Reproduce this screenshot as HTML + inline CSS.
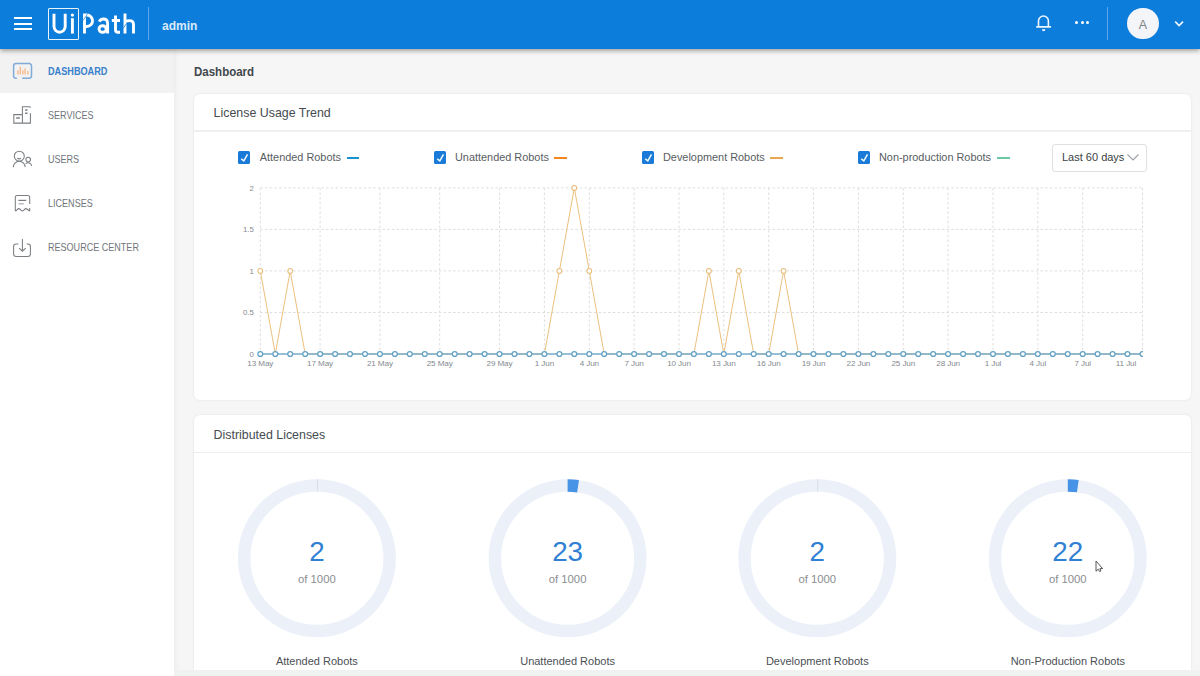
<!DOCTYPE html>
<html><head><meta charset="utf-8">
<style>
*{box-sizing:border-box}
html,body{margin:0;padding:0;width:1200px;height:676px;overflow:hidden;background:#f6f6f7;font-family:"Liberation Sans",sans-serif}
.abs{position:absolute}
#hdr{position:absolute;left:0;top:0;width:1200px;height:48.5px;background:#0d7ddb;box-shadow:0 1.5px 5px rgba(0,0,0,.4);z-index:5}
#side{position:absolute;left:0;top:48px;width:174px;height:628px;background:#fff;box-shadow:1px 0 6px rgba(0,0,0,.06);z-index:2}
.nav{position:absolute;left:0;width:174px;height:44px}
.nav .t{position:absolute;left:47.6px;top:17.9px;font-size:10.4px;transform:scaleX(0.87);transform-origin:0 0;color:#6f757a;white-space:nowrap;line-height:12px}
.nav.act{background:#f2f2f2}
.nav.act .t{color:#3a7fcb;font-weight:bold;transform:scaleX(0.88)}
.card{position:absolute;left:193.6px;width:997px;background:#fff;border-radius:6px;box-shadow:0 0 3px rgba(0,0,0,.08)}
.ctitle{position:absolute;left:20px;font-size:12.4px;color:#454b51;white-space:nowrap}
.cdiv{position:absolute;left:0;width:100%;height:1px;background:#ececec}
.leg{position:absolute;top:151px;font-size:10.9px;color:#585d62;white-space:nowrap}
.cb{position:absolute;top:151px;width:12.3px;height:12.8px;background:#1a7ad8;border-radius:1.6px}
.cb svg{position:absolute;left:0;top:0}
.lg{position:absolute;top:156.6px;width:12.5px;height:2px}
.dnum{position:absolute;top:535.8px;width:120px;text-align:center;font-size:27.8px;color:#3080d4;line-height:32px}
.dof{position:absolute;top:572px;width:120px;text-align:center;font-size:11.3px;color:#8a8d90;line-height:14px}
.dlab{position:absolute;top:654px;width:160px;text-align:center;font-size:11px;color:#4b5055;line-height:14px}
</style></head><body>
<div id="hdr">
  <div class="abs" style="left:14px;top:16.5px;width:17.5px;height:2px;background:#fff"></div>
  <div class="abs" style="left:14px;top:22.6px;width:17.5px;height:2px;background:#fff"></div>
  <div class="abs" style="left:14px;top:28.4px;width:17.5px;height:2px;background:#fff"></div>
  <div class="abs" style="left:47.6px;top:7.6px;width:31.6px;height:32px;border:1.6px solid #e8f3fc;border-radius:1px"></div>
  <svg class="abs" style="left:0;top:0" width="150" height="48" viewBox="0 0 150 48">
    <g fill="none" stroke="#fff" stroke-width="2.9">
      <path d="M54,13.8 V26.6 A5.6,5.6 0 0 0 65.2,26.6 V13.8"/>
      <path d="M72.4,18.2 V33.6"/>
      <path d="M84.5,33.6 V15 H86.8 A5.75,5.75 0 0 1 86.8,26.5 H84.5"/>
      <path d="M99.2,21.6 Q100.6,19 103.4,19 Q107.6,19 107.6,23.4 V33.6"/>
      <ellipse cx="102.6" cy="29" rx="3.6" ry="3.3"/>
      <path d="M115.5,15.4 V30 Q115.5,32.2 117.8,32.2 H120 M111.8,20.5 H120"/>
      <path d="M125,13.6 V33.6 M125,24.5 Q125,20.6 129.3,20.6 Q133.5,20.6 133.5,24.5 V33.6"/>
    </g>
    <circle cx="72.4" cy="15.1" r="1.65" fill="#fff"/>
    <path d="M83,20.5 L87.5,14" stroke="#0d7ddb" stroke-width="0.7"/>
    <path d="M123.5,28 L127.5,22" stroke="#0d7ddb" stroke-width="0.7"/>
  </svg>
  <div class="abs" style="left:148px;top:7px;width:1px;height:33px;background:#5aa6ec"></div>
  <div class="abs" style="left:162px;top:18px;font-size:12px;font-weight:bold;color:#dbeaf8;line-height:16px">admin</div>
  <svg class="abs" style="left:1030px;top:10px" width="30" height="30" viewBox="0 0 30 30">
    <path d="M6.8,16.9 H20.4 M8.5,16.9 V10.95 A4.95,4.95 0 0 1 18.4,10.95 V16.9" fill="none" stroke="#eef6fd" stroke-width="1.6" stroke-linecap="round"/>
    <path d="M11.9,19.3 H15.4 A1.75,1.9 0 0 1 11.9,19.3 Z" fill="#eef6fd"/>
  </svg>
  <div class="abs" style="left:1075px;top:21px;width:3px;height:3px;border-radius:50%;background:#fff"></div>
  <div class="abs" style="left:1080.5px;top:21px;width:3px;height:3px;border-radius:50%;background:#fff"></div>
  <div class="abs" style="left:1086px;top:21px;width:3px;height:3px;border-radius:50%;background:#fff"></div>
  <div class="abs" style="left:1107px;top:7px;width:1px;height:32.5px;background:#5aa6ec"></div>
  <div class="abs" style="left:1127px;top:7.7px;width:31.8px;height:31.8px;border-radius:50%;background:#f3f5f8;text-align:center;line-height:34.6px;font-size:12.5px;color:#808387">A</div>
  <svg class="abs" style="left:1172px;top:19px" width="14" height="10" viewBox="0 0 14 10">
    <path d="M3.2,2.6 L7.1,6.6 L11,2.6" fill="none" stroke="#f2f8fd" stroke-width="1.6"/>
  </svg>
</div>
<div id="side">
  <div class="nav act" style="top:0;height:44.8px"><div class="t">DASHBOARD</div></div>
  <div class="nav" style="top:44px"><div class="t">SERVICES</div></div>
  <div class="nav" style="top:88px"><div class="t">USERS</div></div>
  <div class="nav" style="top:132px"><div class="t">LICENSES</div></div>
  <div class="nav" style="top:176px"><div class="t">RESOURCE CENTER</div></div>
  <!-- icons -->
  <svg class="abs" style="left:0;top:0" width="40" height="230" viewBox="0 48 40 230">
    <path d="M16.9,78.2 H15.9 A2.3,2.3 0 0 1 13.6,75.9 V65.9 A2.3,2.3 0 0 1 15.9,63.6 H29.2 A2.3,2.3 0 0 1 31.5,65.9 V75.9 A2.3,2.3 0 0 1 29.2,78.2 H22.2" fill="none" stroke="#80aad8" stroke-width="1.5"/>
    <path d="M17.9,74.6 V70.2 M20.3,74.6 V66.7 M22.9,74.6 V70.2 M25.1,74.6 V68.2 M27.9,74.6 V70.9" stroke="#f6b888" stroke-width="1.35"/>
    <g fill="none" stroke="#7a7e82" stroke-width="1.05">
      <path d="M22.4,123.1 V106.7 H29.4 Q30.4,106.7 30.6,107.6 M30.4,113.3 V123.1 H13.8 V114.6 H22.4"/>
      <path d="M16.2,118 H19.8 M25.1,110 H27.5 M25.1,113.2 H27.5" stroke-width="1.4"/>
      <circle cx="19.3" cy="156.2" r="5"/>
      <path d="M13.3,167.3 A5.9,5.9 0 0 1 25.1,167.1"/>
      <path d="M17.4,158.3 Q19.1,159.3 20.9,158.3" stroke-width="1.2"/>
      <circle cx="28.2" cy="159.6" r="2.3"/>
      <path d="M25.6,163.6 A3.8,3.8 0 0 1 31.7,165.9"/>
      <path d="M15.3,211 V197.4 A2,2 0 0 1 17.3,195.4 H27.7 A2,2 0 0 1 29.7,197.4 V204 M29.7,208 V210.8 C28.6,210.8 27.1,208.6 25.9,208.6 C24.6,208.6 23.6,211 22.4,211 C21.2,211 20.1,208.6 18.85,208.6 C17.6,208.6 16.4,211 15.3,211"/>
      <path d="M18.4,200.4 H26.2" stroke-width="1.2"/>
      <path d="M18.4,203.8 H23.8" stroke="#a3a6a9" stroke-width="1.1"/>
      <path d="M18.4,243.9 H16.1 A2.5,2.5 0 0 0 13.6,246.4 V253.9 A2.5,2.5 0 0 0 16.1,256.4 H27.9 A2.5,2.5 0 0 0 30.4,253.9 V246.4 A2.5,2.5 0 0 0 27.9,243.9 H26.6"/>
      <path d="M22.4,239.1 V251 M19.1,248.1 L22.4,251.2 L25.7,248.1"/>
    </g>
  </svg>
</div>
<div class="abs" style="left:193.5px;top:63.6px;font-size:13px;font-weight:bold;color:#42474c;line-height:16px;transform:scaleX(0.885);transform-origin:0 0">Dashboard</div>

<div class="card" style="top:94px;height:306px">
  <div class="ctitle" style="top:10.8px;line-height:16px">License Usage Trend</div>
  <div class="cdiv" style="top:36.2px;height:1.6px;background:#efefef"></div>
</div>
<div class="cb" style="left:238px"><svg width="13" height="13"><path d="M3.2,7.8 L5.8,9.8 L9.5,3.3" fill="none" stroke="#eaf4fc" stroke-width="1.6"/></svg></div>
<div class="leg" style="left:259.8px;top:150.8px">Attended Robots</div>
<div class="lg" style="left:346.5px;background:#1991d2"></div>
<div class="cb" style="left:433.8px"><svg width="13" height="13"><path d="M3.2,7.8 L5.8,9.8 L9.5,3.3" fill="none" stroke="#eaf4fc" stroke-width="1.6"/></svg></div>
<div class="leg" style="left:455px;top:150.8px">Unattended Robots</div>
<div class="lg" style="left:554px;background:#f5871f"></div>
<div class="cb" style="left:641.8px"><svg width="13" height="13"><path d="M3.2,7.8 L5.8,9.8 L9.5,3.3" fill="none" stroke="#eaf4fc" stroke-width="1.6"/></svg></div>
<div class="leg" style="left:663px;top:150.8px">Development Robots</div>
<div class="lg" style="left:770px;background:#eaa84e"></div>
<div class="cb" style="left:858px"><svg width="13" height="13"><path d="M3.2,7.8 L5.8,9.8 L9.5,3.3" fill="none" stroke="#eaf4fc" stroke-width="1.6"/></svg></div>
<div class="leg" style="left:879px;top:150.8px">Non-production Robots</div>
<div class="lg" style="left:997.3px;background:#6cc9a1"></div>
<div class="abs" style="left:1052px;top:144px;width:95px;height:27.6px;border:1px solid #e0e0e0;border-radius:3px;background:#fff"></div>
<div class="abs" style="left:1062px;top:150px;font-size:11px;color:#3a3f44;line-height:14px">Last 60 days</div>
<svg class="abs" style="left:1126px;top:152px" width="14" height="10"><path d="M1.5,2.5 L7,8 L12.5,2.5" fill="none" stroke="#9aa0a6" stroke-width="1.1"/></svg>
<svg class="abs" style="left:0;top:0;z-index:3" width="1200" height="400" font-family="Liberation Sans">
<line x1="260.3" y1="187.9" x2="1142.5" y2="187.9" stroke="#dedede" stroke-width="1" stroke-dasharray="2.5,2.2"/>
<line x1="260.3" y1="229.4" x2="1142.5" y2="229.4" stroke="#dedede" stroke-width="1" stroke-dasharray="2.5,2.2"/>
<line x1="260.3" y1="270.9" x2="1142.5" y2="270.9" stroke="#dedede" stroke-width="1" stroke-dasharray="2.5,2.2"/>
<line x1="260.3" y1="312.5" x2="1142.5" y2="312.5" stroke="#dedede" stroke-width="1" stroke-dasharray="2.5,2.2"/>
<line x1="260.3" y1="187.9" x2="260.3" y2="354.0" stroke="#dedede" stroke-width="1" stroke-dasharray="2.5,2.2"/>
<line x1="320.1" y1="187.9" x2="320.1" y2="354.0" stroke="#dedede" stroke-width="1" stroke-dasharray="2.5,2.2"/>
<line x1="379.9" y1="187.9" x2="379.9" y2="354.0" stroke="#dedede" stroke-width="1" stroke-dasharray="2.5,2.2"/>
<line x1="439.7" y1="187.9" x2="439.7" y2="354.0" stroke="#dedede" stroke-width="1" stroke-dasharray="2.5,2.2"/>
<line x1="499.5" y1="187.9" x2="499.5" y2="354.0" stroke="#dedede" stroke-width="1" stroke-dasharray="2.5,2.2"/>
<line x1="544.4" y1="187.9" x2="544.4" y2="354.0" stroke="#dedede" stroke-width="1" stroke-dasharray="2.5,2.2"/>
<line x1="589.3" y1="187.9" x2="589.3" y2="354.0" stroke="#dedede" stroke-width="1" stroke-dasharray="2.5,2.2"/>
<line x1="634.1" y1="187.9" x2="634.1" y2="354.0" stroke="#dedede" stroke-width="1" stroke-dasharray="2.5,2.2"/>
<line x1="679.0" y1="187.9" x2="679.0" y2="354.0" stroke="#dedede" stroke-width="1" stroke-dasharray="2.5,2.2"/>
<line x1="723.8" y1="187.9" x2="723.8" y2="354.0" stroke="#dedede" stroke-width="1" stroke-dasharray="2.5,2.2"/>
<line x1="768.7" y1="187.9" x2="768.7" y2="354.0" stroke="#dedede" stroke-width="1" stroke-dasharray="2.5,2.2"/>
<line x1="813.5" y1="187.9" x2="813.5" y2="354.0" stroke="#dedede" stroke-width="1" stroke-dasharray="2.5,2.2"/>
<line x1="858.4" y1="187.9" x2="858.4" y2="354.0" stroke="#dedede" stroke-width="1" stroke-dasharray="2.5,2.2"/>
<line x1="903.3" y1="187.9" x2="903.3" y2="354.0" stroke="#dedede" stroke-width="1" stroke-dasharray="2.5,2.2"/>
<line x1="948.1" y1="187.9" x2="948.1" y2="354.0" stroke="#dedede" stroke-width="1" stroke-dasharray="2.5,2.2"/>
<line x1="993.0" y1="187.9" x2="993.0" y2="354.0" stroke="#dedede" stroke-width="1" stroke-dasharray="2.5,2.2"/>
<line x1="1037.8" y1="187.9" x2="1037.8" y2="354.0" stroke="#dedede" stroke-width="1" stroke-dasharray="2.5,2.2"/>
<line x1="1082.7" y1="187.9" x2="1082.7" y2="354.0" stroke="#dedede" stroke-width="1" stroke-dasharray="2.5,2.2"/>
<line x1="1142.5" y1="187.9" x2="1142.5" y2="354.0" stroke="#dedede" stroke-width="1" stroke-dasharray="2.5,2.2"/>
<text x="253.8" y="190.7" text-anchor="end" font-size="7.8" fill="#858a8f">2</text>
<text x="253.8" y="232.2" text-anchor="end" font-size="7.8" fill="#858a8f">1.5</text>
<text x="253.8" y="273.8" text-anchor="end" font-size="7.8" fill="#858a8f">1</text>
<text x="253.8" y="315.3" text-anchor="end" font-size="7.8" fill="#858a8f">0.5</text>
<text x="253.8" y="356.8" text-anchor="end" font-size="7.8" fill="#858a8f">0</text>
<text x="260.3" y="365.8" text-anchor="middle" font-size="8.1" letter-spacing="-0.1" fill="#858a8f">13 May</text>
<text x="320.1" y="365.8" text-anchor="middle" font-size="8.1" letter-spacing="-0.1" fill="#858a8f">17 May</text>
<text x="379.9" y="365.8" text-anchor="middle" font-size="8.1" letter-spacing="-0.1" fill="#858a8f">21 May</text>
<text x="439.7" y="365.8" text-anchor="middle" font-size="8.1" letter-spacing="-0.1" fill="#858a8f">25 May</text>
<text x="499.5" y="365.8" text-anchor="middle" font-size="8.1" letter-spacing="-0.1" fill="#858a8f">29 May</text>
<text x="544.4" y="365.8" text-anchor="middle" font-size="8.1" letter-spacing="-0.1" fill="#858a8f">1 Jun</text>
<text x="589.3" y="365.8" text-anchor="middle" font-size="8.1" letter-spacing="-0.1" fill="#858a8f">4 Jun</text>
<text x="634.1" y="365.8" text-anchor="middle" font-size="8.1" letter-spacing="-0.1" fill="#858a8f">7 Jun</text>
<text x="679.0" y="365.8" text-anchor="middle" font-size="8.1" letter-spacing="-0.1" fill="#858a8f">10 Jun</text>
<text x="723.8" y="365.8" text-anchor="middle" font-size="8.1" letter-spacing="-0.1" fill="#858a8f">13 Jun</text>
<text x="768.7" y="365.8" text-anchor="middle" font-size="8.1" letter-spacing="-0.1" fill="#858a8f">16 Jun</text>
<text x="813.5" y="365.8" text-anchor="middle" font-size="8.1" letter-spacing="-0.1" fill="#858a8f">19 Jun</text>
<text x="858.4" y="365.8" text-anchor="middle" font-size="8.1" letter-spacing="-0.1" fill="#858a8f">22 Jun</text>
<text x="903.3" y="365.8" text-anchor="middle" font-size="8.1" letter-spacing="-0.1" fill="#858a8f">25 Jun</text>
<text x="948.1" y="365.8" text-anchor="middle" font-size="8.1" letter-spacing="-0.1" fill="#858a8f">28 Jun</text>
<text x="993.0" y="365.8" text-anchor="middle" font-size="8.1" letter-spacing="-0.1" fill="#858a8f">1 Jul</text>
<text x="1037.8" y="365.8" text-anchor="middle" font-size="8.1" letter-spacing="-0.1" fill="#858a8f">4 Jul</text>
<text x="1082.7" y="365.8" text-anchor="middle" font-size="8.1" letter-spacing="-0.1" fill="#858a8f">7 Jul</text>
<text x="1126.0" y="365.8" text-anchor="middle" font-size="8.1" letter-spacing="-0.1" fill="#858a8f">11 Jul</text>
<polyline points="260.3,270.9 275.3,354.0 290.2,270.9 305.2,354.0 320.1,354.0 335.1,354.0 350.0,354.0 365.0,354.0 379.9,354.0 394.9,354.0 409.8,354.0 424.8,354.0 439.7,354.0 454.7,354.0 469.6,354.0 484.6,354.0 499.5,354.0 514.5,354.0 529.4,354.0 544.4,354.0 559.4,270.9 574.3,187.9 589.3,270.9 604.2,354.0 619.2,354.0 634.1,354.0 649.1,354.0 664.0,354.0 679.0,354.0 693.9,354.0 708.9,270.9 723.8,354.0 738.8,270.9 753.7,354.0 768.7,354.0 783.6,270.9 798.6,354.0 813.5,354.0 828.5,354.0 843.4,354.0 858.4,354.0 873.4,354.0 888.3,354.0 903.3,354.0 918.2,354.0 933.2,354.0 948.1,354.0 963.1,354.0 978.0,354.0 993.0,354.0 1007.9,354.0 1022.9,354.0 1037.8,354.0 1052.8,354.0 1067.7,354.0 1082.7,354.0 1097.6,354.0 1112.6,354.0 1127.5,354.0 1142.5,354.0" fill="none" stroke="#ebc07e" stroke-width="1"/>
<circle cx="260.3" cy="270.9" r="2.4" fill="#fff" stroke="#e8bd7c" stroke-width="1.05"/>
<circle cx="290.2" cy="270.9" r="2.4" fill="#fff" stroke="#e8bd7c" stroke-width="1.05"/>
<circle cx="559.4" cy="270.9" r="2.4" fill="#fff" stroke="#e8bd7c" stroke-width="1.05"/>
<circle cx="574.3" cy="187.9" r="2.4" fill="#fff" stroke="#e8bd7c" stroke-width="1.05"/>
<circle cx="589.3" cy="270.9" r="2.4" fill="#fff" stroke="#e8bd7c" stroke-width="1.05"/>
<circle cx="708.9" cy="270.9" r="2.4" fill="#fff" stroke="#e8bd7c" stroke-width="1.05"/>
<circle cx="738.8" cy="270.9" r="2.4" fill="#fff" stroke="#e8bd7c" stroke-width="1.05"/>
<circle cx="783.6" cy="270.9" r="2.4" fill="#fff" stroke="#e8bd7c" stroke-width="1.05"/>
<clipPath id="cp"><rect x="252.3" y="150" width="890.7" height="220"/></clipPath><g clip-path="url(#cp)">
<line x1="260.3" y1="354.0" x2="1142.5" y2="354.0" stroke="#74abc9" stroke-width="1.6"/>
<circle cx="260.3" cy="354.0" r="2.45" fill="#fff" stroke="#64a2c4" stroke-width="1.25"/>
<circle cx="275.3" cy="354.0" r="2.45" fill="#fff" stroke="#64a2c4" stroke-width="1.25"/>
<circle cx="290.2" cy="354.0" r="2.45" fill="#fff" stroke="#64a2c4" stroke-width="1.25"/>
<circle cx="305.2" cy="354.0" r="2.45" fill="#fff" stroke="#64a2c4" stroke-width="1.25"/>
<circle cx="320.1" cy="354.0" r="2.45" fill="#fff" stroke="#64a2c4" stroke-width="1.25"/>
<circle cx="335.1" cy="354.0" r="2.45" fill="#fff" stroke="#64a2c4" stroke-width="1.25"/>
<circle cx="350.0" cy="354.0" r="2.45" fill="#fff" stroke="#64a2c4" stroke-width="1.25"/>
<circle cx="365.0" cy="354.0" r="2.45" fill="#fff" stroke="#64a2c4" stroke-width="1.25"/>
<circle cx="379.9" cy="354.0" r="2.45" fill="#fff" stroke="#64a2c4" stroke-width="1.25"/>
<circle cx="394.9" cy="354.0" r="2.45" fill="#fff" stroke="#64a2c4" stroke-width="1.25"/>
<circle cx="409.8" cy="354.0" r="2.45" fill="#fff" stroke="#64a2c4" stroke-width="1.25"/>
<circle cx="424.8" cy="354.0" r="2.45" fill="#fff" stroke="#64a2c4" stroke-width="1.25"/>
<circle cx="439.7" cy="354.0" r="2.45" fill="#fff" stroke="#64a2c4" stroke-width="1.25"/>
<circle cx="454.7" cy="354.0" r="2.45" fill="#fff" stroke="#64a2c4" stroke-width="1.25"/>
<circle cx="469.6" cy="354.0" r="2.45" fill="#fff" stroke="#64a2c4" stroke-width="1.25"/>
<circle cx="484.6" cy="354.0" r="2.45" fill="#fff" stroke="#64a2c4" stroke-width="1.25"/>
<circle cx="499.5" cy="354.0" r="2.45" fill="#fff" stroke="#64a2c4" stroke-width="1.25"/>
<circle cx="514.5" cy="354.0" r="2.45" fill="#fff" stroke="#64a2c4" stroke-width="1.25"/>
<circle cx="529.4" cy="354.0" r="2.45" fill="#fff" stroke="#64a2c4" stroke-width="1.25"/>
<circle cx="544.4" cy="354.0" r="2.45" fill="#fff" stroke="#64a2c4" stroke-width="1.25"/>
<circle cx="559.4" cy="354.0" r="2.45" fill="#fff" stroke="#64a2c4" stroke-width="1.25"/>
<circle cx="574.3" cy="354.0" r="2.45" fill="#fff" stroke="#64a2c4" stroke-width="1.25"/>
<circle cx="589.3" cy="354.0" r="2.45" fill="#fff" stroke="#64a2c4" stroke-width="1.25"/>
<circle cx="604.2" cy="354.0" r="2.45" fill="#fff" stroke="#64a2c4" stroke-width="1.25"/>
<circle cx="619.2" cy="354.0" r="2.45" fill="#fff" stroke="#64a2c4" stroke-width="1.25"/>
<circle cx="634.1" cy="354.0" r="2.45" fill="#fff" stroke="#64a2c4" stroke-width="1.25"/>
<circle cx="649.1" cy="354.0" r="2.45" fill="#fff" stroke="#64a2c4" stroke-width="1.25"/>
<circle cx="664.0" cy="354.0" r="2.45" fill="#fff" stroke="#64a2c4" stroke-width="1.25"/>
<circle cx="679.0" cy="354.0" r="2.45" fill="#fff" stroke="#64a2c4" stroke-width="1.25"/>
<circle cx="693.9" cy="354.0" r="2.45" fill="#fff" stroke="#64a2c4" stroke-width="1.25"/>
<circle cx="708.9" cy="354.0" r="2.45" fill="#fff" stroke="#64a2c4" stroke-width="1.25"/>
<circle cx="723.8" cy="354.0" r="2.45" fill="#fff" stroke="#64a2c4" stroke-width="1.25"/>
<circle cx="738.8" cy="354.0" r="2.45" fill="#fff" stroke="#64a2c4" stroke-width="1.25"/>
<circle cx="753.7" cy="354.0" r="2.45" fill="#fff" stroke="#64a2c4" stroke-width="1.25"/>
<circle cx="768.7" cy="354.0" r="2.45" fill="#fff" stroke="#64a2c4" stroke-width="1.25"/>
<circle cx="783.6" cy="354.0" r="2.45" fill="#fff" stroke="#64a2c4" stroke-width="1.25"/>
<circle cx="798.6" cy="354.0" r="2.45" fill="#fff" stroke="#64a2c4" stroke-width="1.25"/>
<circle cx="813.5" cy="354.0" r="2.45" fill="#fff" stroke="#64a2c4" stroke-width="1.25"/>
<circle cx="828.5" cy="354.0" r="2.45" fill="#fff" stroke="#64a2c4" stroke-width="1.25"/>
<circle cx="843.4" cy="354.0" r="2.45" fill="#fff" stroke="#64a2c4" stroke-width="1.25"/>
<circle cx="858.4" cy="354.0" r="2.45" fill="#fff" stroke="#64a2c4" stroke-width="1.25"/>
<circle cx="873.4" cy="354.0" r="2.45" fill="#fff" stroke="#64a2c4" stroke-width="1.25"/>
<circle cx="888.3" cy="354.0" r="2.45" fill="#fff" stroke="#64a2c4" stroke-width="1.25"/>
<circle cx="903.3" cy="354.0" r="2.45" fill="#fff" stroke="#64a2c4" stroke-width="1.25"/>
<circle cx="918.2" cy="354.0" r="2.45" fill="#fff" stroke="#64a2c4" stroke-width="1.25"/>
<circle cx="933.2" cy="354.0" r="2.45" fill="#fff" stroke="#64a2c4" stroke-width="1.25"/>
<circle cx="948.1" cy="354.0" r="2.45" fill="#fff" stroke="#64a2c4" stroke-width="1.25"/>
<circle cx="963.1" cy="354.0" r="2.45" fill="#fff" stroke="#64a2c4" stroke-width="1.25"/>
<circle cx="978.0" cy="354.0" r="2.45" fill="#fff" stroke="#64a2c4" stroke-width="1.25"/>
<circle cx="993.0" cy="354.0" r="2.45" fill="#fff" stroke="#64a2c4" stroke-width="1.25"/>
<circle cx="1007.9" cy="354.0" r="2.45" fill="#fff" stroke="#64a2c4" stroke-width="1.25"/>
<circle cx="1022.9" cy="354.0" r="2.45" fill="#fff" stroke="#64a2c4" stroke-width="1.25"/>
<circle cx="1037.8" cy="354.0" r="2.45" fill="#fff" stroke="#64a2c4" stroke-width="1.25"/>
<circle cx="1052.8" cy="354.0" r="2.45" fill="#fff" stroke="#64a2c4" stroke-width="1.25"/>
<circle cx="1067.7" cy="354.0" r="2.45" fill="#fff" stroke="#64a2c4" stroke-width="1.25"/>
<circle cx="1082.7" cy="354.0" r="2.45" fill="#fff" stroke="#64a2c4" stroke-width="1.25"/>
<circle cx="1097.6" cy="354.0" r="2.45" fill="#fff" stroke="#64a2c4" stroke-width="1.25"/>
<circle cx="1112.6" cy="354.0" r="2.45" fill="#fff" stroke="#64a2c4" stroke-width="1.25"/>
<circle cx="1127.5" cy="354.0" r="2.45" fill="#fff" stroke="#64a2c4" stroke-width="1.25"/>
<circle cx="1142.5" cy="354.0" r="2.45" fill="#fff" stroke="#64a2c4" stroke-width="1.25"/>
</g>
</svg>

<div class="card" style="top:414.6px;height:255px;border-radius:6px 6px 0 0">
  <div class="ctitle" style="top:12.3px;line-height:16px">Distributed Licenses</div>
  <div class="cdiv" style="top:37.4px;height:1.1px;background:#eeeeee"></div>
</div>
<svg class="abs" style="left:0;top:0;z-index:3" width="1200" height="676">
<circle cx="316.9" cy="558.2" r="72.75" fill="none" stroke="#ecf1f9" stroke-width="12.5"/><path d="M316.90,485.45 A72.75,72.75 0 0 1 317.81,485.46" fill="none" stroke="#d3dcea" stroke-width="12.5"/><circle cx="567.6" cy="558.2" r="72.75" fill="none" stroke="#ecf1f9" stroke-width="12.5"/><path d="M567.60,485.45 A72.75,72.75 0 0 1 578.08,486.21" fill="none" stroke="#4794e6" stroke-width="12.5"/><circle cx="817.3" cy="558.2" r="72.75" fill="none" stroke="#ecf1f9" stroke-width="12.5"/><path d="M817.30,485.45 A72.75,72.75 0 0 1 818.21,485.46" fill="none" stroke="#d3dcea" stroke-width="12.5"/><circle cx="1067.8" cy="558.2" r="72.75" fill="none" stroke="#ecf1f9" stroke-width="12.5"/><path d="M1067.80,485.45 A72.75,72.75 0 0 1 1077.82,486.14" fill="none" stroke="#4794e6" stroke-width="12.5"/>
</svg>
<div style="position:absolute;left:0;top:0;z-index:4"><div class="dnum" style="left:256.9px">2</div><div class="dof" style="left:256.9px">of 1000</div><div class="dlab" style="left:236.9px">Attended Robots</div><div class="dnum" style="left:507.6px">23</div><div class="dof" style="left:507.6px">of 1000</div><div class="dlab" style="left:487.6px">Unattended Robots</div><div class="dnum" style="left:757.3px">2</div><div class="dof" style="left:757.3px">of 1000</div><div class="dlab" style="left:737.3px">Development Robots</div><div class="dnum" style="left:1007.8px">22</div><div class="dof" style="left:1007.8px">of 1000</div><div class="dlab" style="left:987.8px">Non-Production Robots</div></div>
<svg class="abs" style="left:1095.1px;top:560.2px;z-index:6" width="12" height="16" viewBox="0 0 12 16">
  <path d="M1,1 V11.2 L3.2,9.2 L4.6,11.6 L5.9,11 L4.9,8.6 H7.6 Z" fill="#fff" stroke="#444" stroke-width="0.9" stroke-linejoin="round"/>
</svg>
<div class="abs" style="left:174px;top:669.6px;width:1026px;height:7px;background:#f0f1f1;z-index:7"></div>
</body></html>
